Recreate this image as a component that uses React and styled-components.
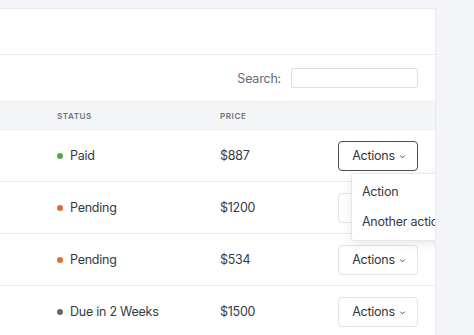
import React from 'react';
import styled, { createGlobalStyle } from 'styled-components';

const rows = [
  { status: 'Paid', tone: 'paid', price: '$887', open: true },
  { status: 'Pending', tone: 'pending', price: '$1200' },
  { status: 'Pending', tone: 'pending', price: '$534' },
  { status: 'Due in 2 Weeks', tone: 'due', price: '$1500' },
];

const dotColors = {
  paid: '#52a552',
  pending: '#e36d2c',
  due: '#64666e',
};

export default function App() {
  return (
    <>
      <GlobalStyle />
      <Page>
        <Card>
          <CardHeader />
          <SearchBar>
            <SearchLabel>Search:</SearchLabel>
            <SearchInput type="text" />
          </SearchBar>
          <HeadRow>
            <span />
            <HeadCell>Status</HeadCell>
            <HeadCell>Price</HeadCell>
            <span />
          </HeadRow>
          {rows.map((row, i) => (
            <Row key={i}>
              <span />
              <Status>
                <Dot $color={dotColors[row.tone]} />
                {row.status}
              </Status>
              <Price>{row.price}</Price>
              <ActionCell>
                <ActionButton $active={row.open}>
                  Actions
                  <Chevron viewBox="0 0 8 8">
                    <path d="M1.5 3l2.5 2.5L6.5 3" />
                  </Chevron>
                </ActionButton>
                {row.open && (
                  <Menu>
                    <MenuItem>Action</MenuItem>
                    <MenuItem>Another action</MenuItem>
                  </Menu>
                )}
              </ActionCell>
            </Row>
          ))}
        </Card>
      </Page>
    </>
  );
}

const GlobalStyle = createGlobalStyle`
  html, body {
    margin: 0;
    background: #f4f5f8;
    font-family: Inter, "Noto Sans", sans-serif;
    color: #343a44;
    overflow: hidden;
  }
`;

const Page = styled.div`
  padding-top: 8px;
  height: 335px;
  box-sizing: border-box;
`;

const Card = styled.div`
  width: 456px;
  margin-left: -20px;
  background: #fff;
  border: 1px solid #e8eaee;
  border-bottom: 0;
  overflow: hidden;
  box-sizing: border-box;
`;

const CardHeader = styled.div`
  height: 45px;
  border-bottom: 1px solid #e6e8ec;
`;

const SearchBar = styled.div`
  height: 46px;
  display: flex;
  align-items: center;
  justify-content: flex-end;
  gap: 10px;
  padding-right: 17px;
  box-sizing: border-box;
`;

const SearchLabel = styled.label`
  font-size: 12.5px;
  letter-spacing: -0.2px;
  color: #666b73;
`;

const SearchInput = styled.input`
  width: 127px;
  height: 20px;
  box-sizing: border-box;
  border: 1px solid #dcdfe4;
  border-radius: 2px;
  outline: none;
  margin: 0;
`;

const grid = `
  display: grid;
  grid-template-columns: 76px 163px 1fr auto;
  align-items: center;
  padding-right: 17px;
  box-sizing: border-box;
`;

const HeadRow = styled.div`
  ${grid}
  height: 28px;
  background: #f4f5f7;
  border-top: 1px solid #eceef1;
`;

const HeadCell = styled.span`
  font-size: 8px;
  font-weight: 600;
  letter-spacing: 0.6px;
  text-transform: uppercase;
  color: #6e737b;
`;

const Row = styled.div`
  ${grid}
  height: 52px;
  border-top: 1px solid #e9ebee;
  font-size: 12.5px;
  letter-spacing: -0.25px;
`;

const Status = styled.span`
  display: flex;
  align-items: center;
  gap: 7px;
`;

const Dot = styled.i`
  width: 6px;
  height: 6px;
  border-radius: 50%;
  background: ${({ $color }) => $color};
`;

const Price = styled.span``;

const ActionCell = styled.div`
  position: relative;
`;

const ActionButton = styled.button`
  width: 80px;
  height: 30px;
  display: flex;
  align-items: center;
  justify-content: center;
  gap: 4px;
  background: #fff;
  border: 1px solid ${({ $active }) => ($active ? '#4a4f57' : '#e1e4e8')};
  border-radius: 4px;
  font-family: inherit;
  font-size: 12.5px;
  letter-spacing: -0.25px;
  color: #2f343c;
  padding: 0 0 0 2px;
`;

const Chevron = styled.svg`
  width: 7px;
  height: 7px;
  fill: none;
  stroke: #3a3f47;
  stroke-width: 1.1;
  margin-top: 2px;
`;

const Menu = styled.div`
  position: absolute;
  top: 32px;
  left: 13px;
  width: 130px;
  padding: 3px 0;
  background: #fff;
  border: 1px solid #e6e8ec;
  border-radius: 3px;
  box-shadow: 0 3px 10px rgba(30, 40, 60, 0.1);
  z-index: 2;
`;

const MenuItem = styled.div`
  padding: 7px 10px 8px;
  font-size: 12.5px;
  letter-spacing: -0.25px;
  color: #343a44;
  white-space: nowrap;
`;
